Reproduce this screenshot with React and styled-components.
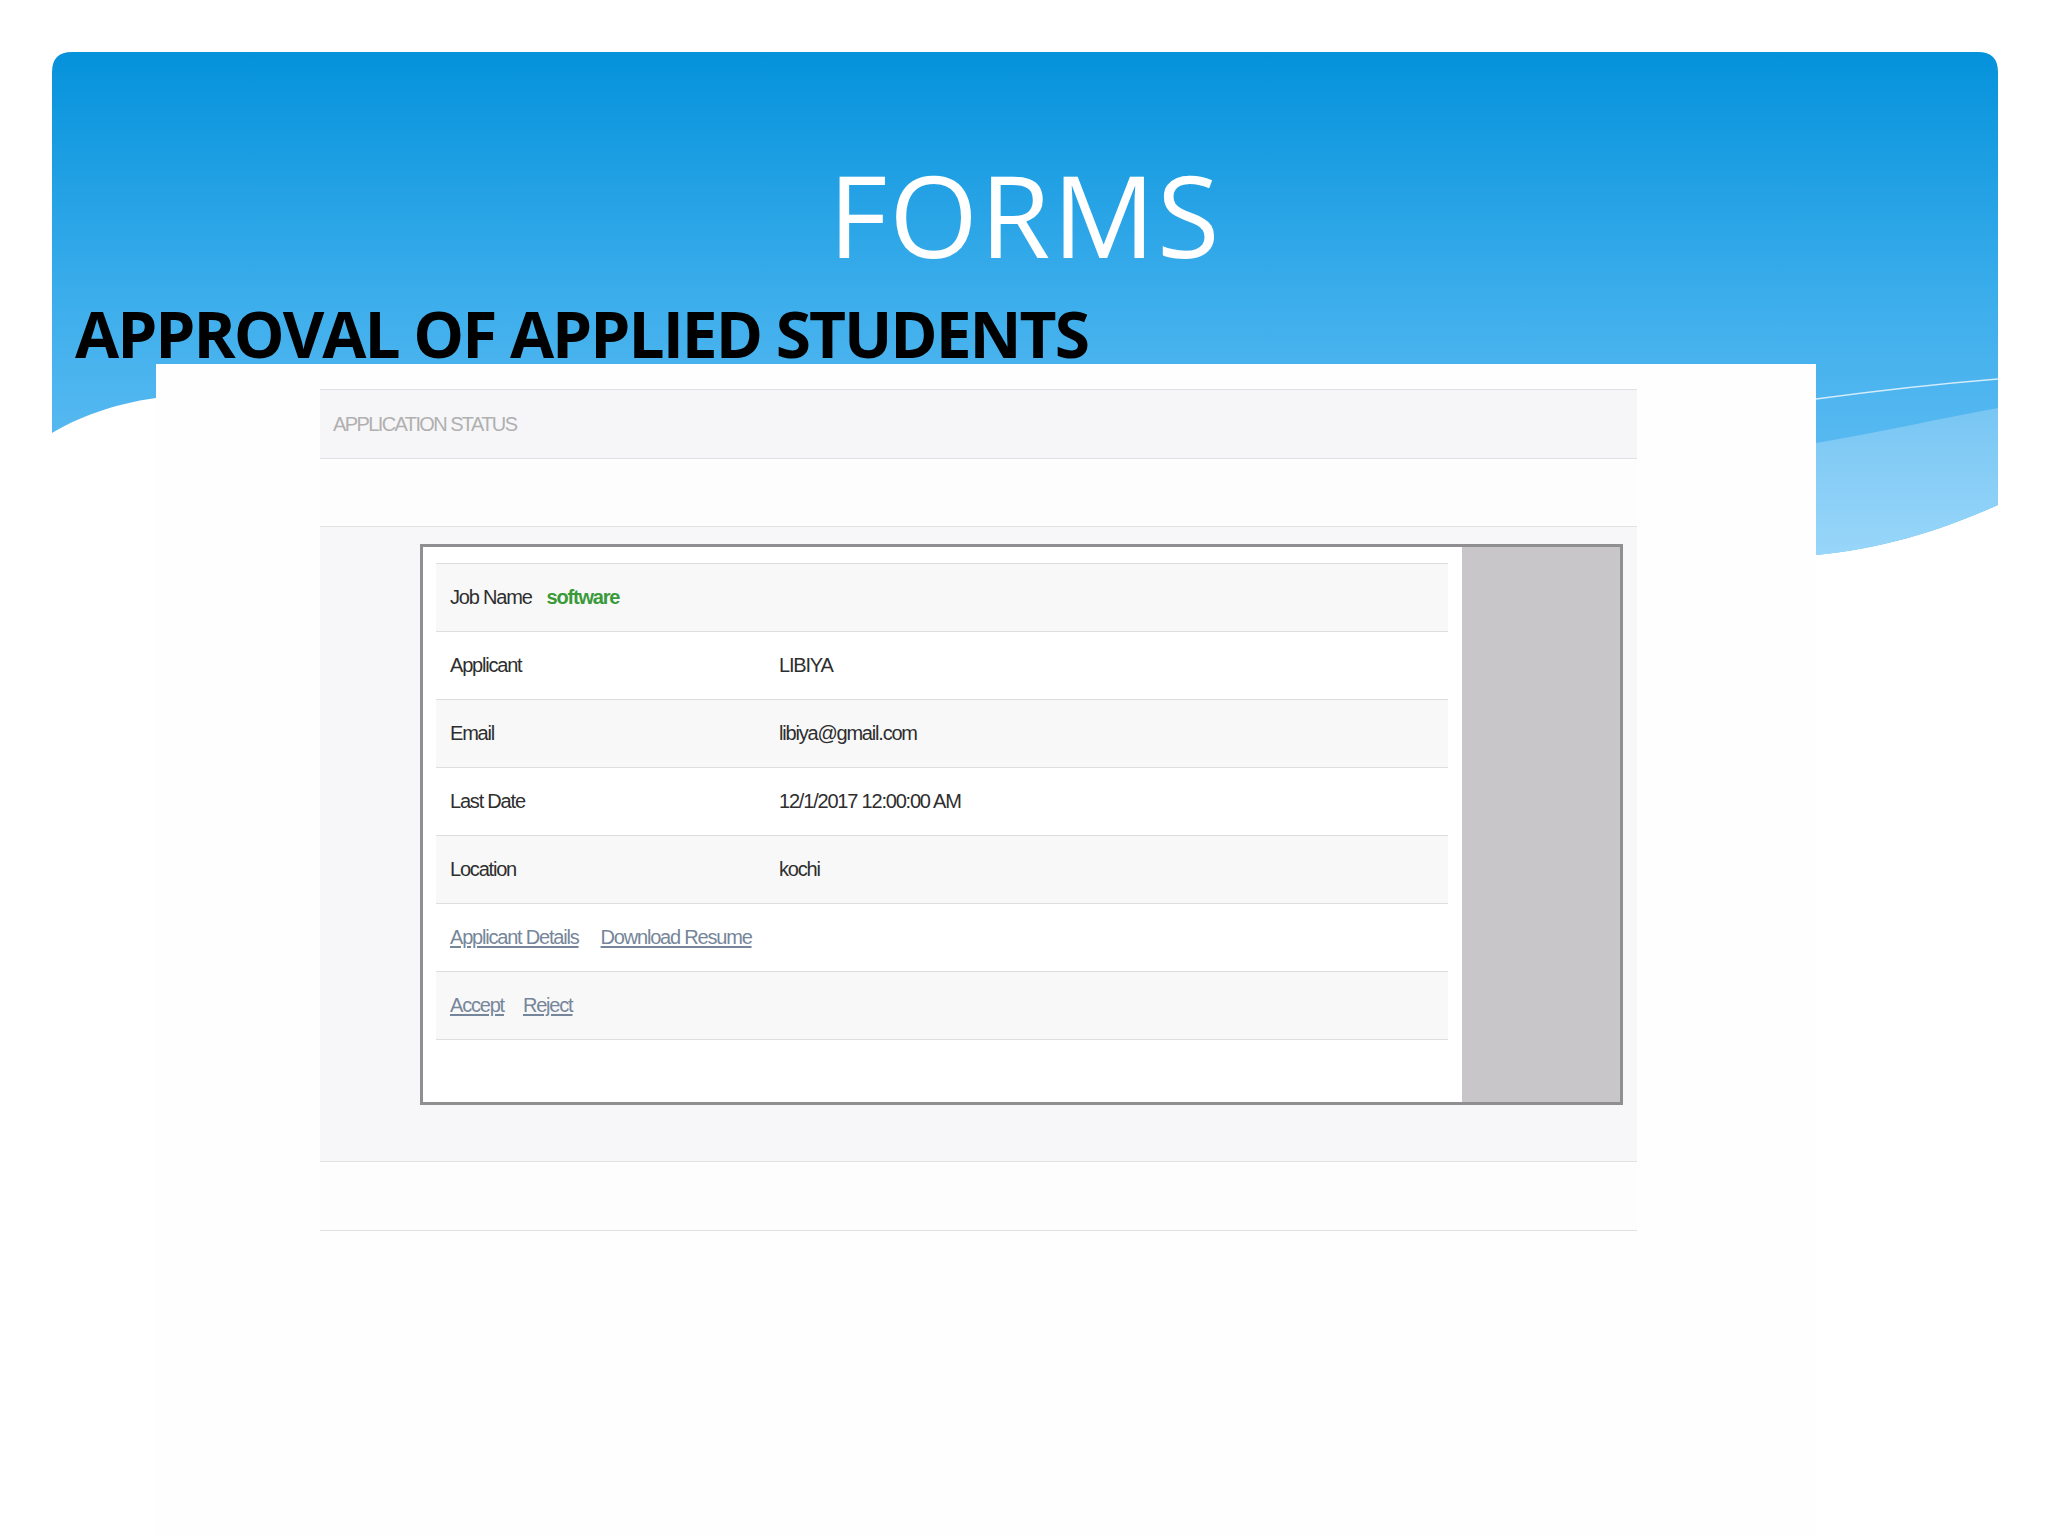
import React from "react";
import styled, { createGlobalStyle } from "styled-components";

const narrow = `"Liberation Sans", Arial, sans-serif`;

const GlobalStyle = createGlobalStyle`
  html, body {
    margin: 0;
    padding: 0;
    background: #ffffff;
  }
  body {
    width: 2048px;
    height: 1536px;
    overflow: hidden;
  }
`;

const Slide = styled.div`
  width: 2048px;
  height: 1536px;
  padding-top: 52px;
  box-sizing: border-box;
  background: #ffffff;
  overflow: hidden;
`;

const Banner = styled.header`
  position: relative;
  margin-left: 52px;
  width: 1946px;
  height: 510px;
  padding-top: 105px;
  box-sizing: border-box;
`;

const BannerShape = styled.svg`
  position: absolute;
  left: 0;
  top: 0;
  width: 100%;
  height: 100%;
`;

const Title = styled.h1`
  position: relative;
  margin: 0;
  text-align: center;
  font-family: "Open Sans", "Liberation Sans", sans-serif;
  font-weight: 400;
  font-size: 114px;
  line-height: 113px;
  letter-spacing: 2px;
  color: #ffffff;
`;

const Subtitle = styled.h2`
  position: relative;
  margin: 32px 0 0 23px;
  font-family: "Open Sans", "Liberation Sans", sans-serif;
  font-weight: 700;
  font-size: 64px;
  line-height: 64px;
  letter-spacing: -2px;
  color: #000000;
`;

const Shot = styled.section`
  position: relative;
  margin: -198px 0 0 156px;
  width: 1660px;
  height: 1172px;
  padding: 25px 0 0 164px;
  box-sizing: border-box;
  background: #fefefe;
`;

const Frame = styled.div`
  width: 1317px;
  font-family: ${narrow};
`;

const StatusBar = styled.div`
  display: flex;
  align-items: center;
  height: 68px;
  padding-left: 13px;
  border-top: 1px solid #e1e1e3;
  border-bottom: 1px solid #e1e1e3;
  background: #f6f6f8;
  color: #b0b0b0;
  font-size: 20px;
  letter-spacing: -1.6px;
`;

const Band = styled.div`
  height: ${(p) => p.h}px;
  border-bottom: 1px solid #e1e1e3;
  background: #fdfdfd;
`;

const Panel = styled.div`
  height: 635px;
  padding: 17px 0 0 100px;
  box-sizing: border-box;
  border-bottom: 1px solid #e1e1e3;
  background: #f7f7f9;
`;

const Modal = styled.div`
  display: flex;
  width: 1203px;
  height: 561px;
  box-sizing: border-box;
  border: 3px solid #8f8f91;
`;

const ModalBody = styled.div`
  flex: 1;
  padding: 16px 14px 0 13px;
  background: #ffffff;
`;

const ModalSide = styled.div`
  width: 158px;
  background: #c8c6c9;
`;

const Table = styled.div`
  border-bottom: 1px solid #dedee0;
`;

const Row = styled.div`
  display: grid;
  grid-template-columns: 329px 1fr;
  height: 67px;
  border-top: 1px solid #dedee0;
  background: ${(p) => (p.striped ? "#f8f8f9" : "#ffffff")};
`;

const Cell = styled.div`
  display: flex;
  align-items: center;
  gap: ${(p) => p.gap || 0}px;
  grid-column: ${(p) => (p.wide ? "1 / -1" : "auto")};
  padding: 0 14px;
  color: #2e2e2e;
  font-size: 20px;
  letter-spacing: -1.2px;
`;

const JobValue = styled.span`
  color: #3a9a3a;
  font-weight: 700;
`;

const Link = styled.a`
  color: #76869a;
  text-decoration: underline;
  text-underline-offset: 2px;
  cursor: pointer;
`;

const details = [
  ["Applicant", "LIBIYA"],
  ["Email", "libiya@gmail.com"],
  ["Last Date", "12/1/2017 12:00:00 AM"],
  ["Location", "kochi"],
];

const App = () => {
  return (
    <Slide>
      <GlobalStyle />
      <Banner>
        <BannerShape viewBox="0 0 1946 510" preserveAspectRatio="none">
          <defs>
            <linearGradient id="sky" x1="0" y1="0" x2="0" y2="1">
              <stop offset="0" stopColor="#0492db" />
              <stop offset="0.5" stopColor="#3daeec" />
              <stop offset="0.75" stopColor="#55b8f0" />
              <stop offset="1" stopColor="#62bef2" />
            </linearGradient>
            <linearGradient id="wisp" x1="0" y1="0" x2="0" y2="1">
              <stop offset="0" stopColor="#78c6f3" />
              <stop offset="1" stopColor="#9ad7fa" />
            </linearGradient>
          </defs>
          <path
            d="M0,20 Q0,0 20,0 L1926,0 Q1946,0 1946,20 L1946,453 C1890,478 1830,497 1764,503 C1300,520 600,380 104,346 C60,352 25,366 0,381 Z"
            fill="url(#sky)"
          />
          <path
            d="M1200,420 C1500,400 1700,395 1764,391 C1830,380 1890,366 1946,356 L1946,453 C1890,478 1830,497 1764,503 L1200,510 Z"
            fill="url(#wisp)"
          />
          <path
            d="M1764,347 Q1860,334 1946,327"
            fill="none"
            stroke="rgba(255,255,255,0.75)"
            strokeWidth="1.5"
          />
        </BannerShape>
        <Title>FORMS</Title>
        <Subtitle>APPROVAL OF APPLIED STUDENTS</Subtitle>
      </Banner>

      <Shot>
        <Frame>
          <StatusBar>APPLICATION STATUS</StatusBar>
          <Band h={67} />
          <Panel>
            <Modal>
              <ModalBody>
                <Table>
                  <Row striped>
                    <Cell wide gap={15}>
                      Job Name <JobValue>software</JobValue>
                    </Cell>
                  </Row>
                  {details.map(([label, value], i) => (
                    <Row key={label} striped={i % 2 === 1}>
                      <Cell>{label}</Cell>
                      <Cell>{value}</Cell>
                    </Row>
                  ))}
                  <Row>
                    <Cell wide gap={22}>
                      <Link>Applicant Details</Link>
                      <Link>Download Resume</Link>
                    </Cell>
                  </Row>
                  <Row striped>
                    <Cell wide gap={19}>
                      <Link>Accept</Link>
                      <Link>Reject</Link>
                    </Cell>
                  </Row>
                </Table>
              </ModalBody>
              <ModalSide />
            </Modal>
          </Panel>
          <Band h={68} />
        </Frame>
      </Shot>
    </Slide>
  );
};

export default App;
